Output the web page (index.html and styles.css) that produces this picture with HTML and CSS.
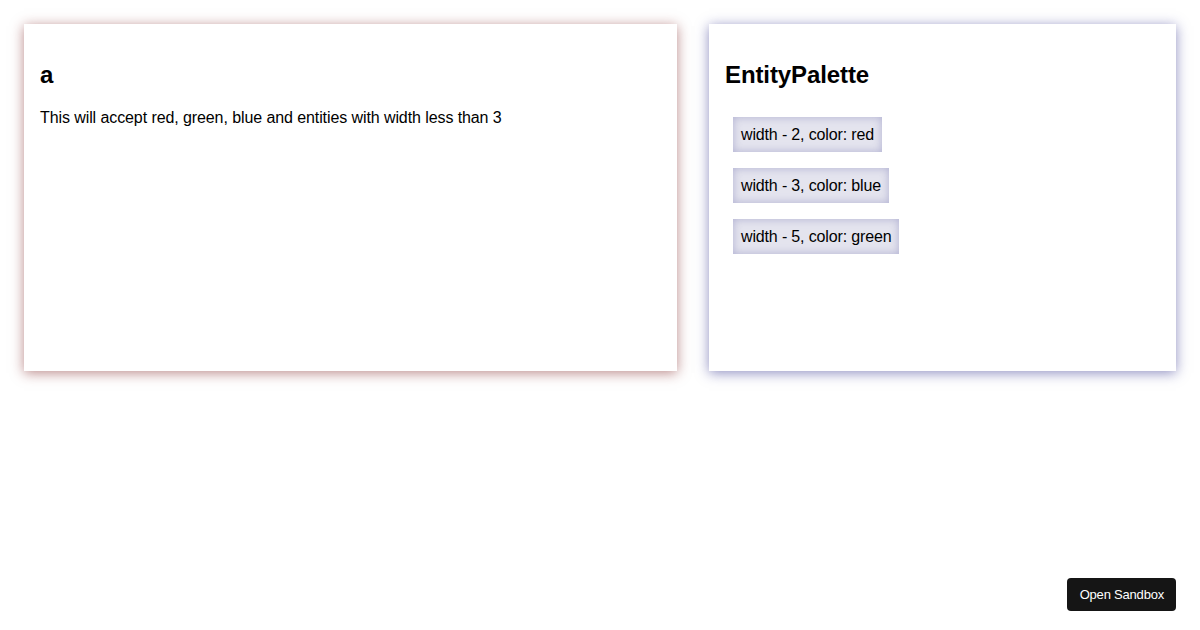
FILE: index.html
```html
<!DOCTYPE html>
<html lang="en">
<head>
    <meta charset="UTF-8">
    <meta name="viewport" content="width=device-width, initial-scale=1.0">
    <title>Entity drop</title>
    <link rel="stylesheet" href="styles.css">
</head>
<body>

<div class="board">
    <div class="card card-target">
        <h2>a</h2>
        <p>This will accept red, green, blue and entities with width less than 3</p>
    </div>
    <div class="card card-palette">
        <h2>EntityPalette</h2>
        <div class="entity-list">
            <div class="entity">width - 2, color: red</div>
            <div class="entity">width - 3, color: blue</div>
            <div class="entity">width - 5, color: green</div>
        </div>
    </div>
</div>

<a class="sandbox-btn" href="#">Open Sandbox</a>

</body>
</html>
```

FILE: styles.css
```css
/* global */
* {
    box-sizing: border-box;
}

body {
    margin: 0;
    padding: 24px;
    font-family: 'Liberation Sans', Arial, sans-serif;
    color: #000;
    background: #fff;
}

/* cards */
.board {
    display: grid;
    grid-template-columns: 653px 467px;
    gap: 32px;
}

.card {
    height: 347px;
    padding: 17px 16px;
    background: #fff;
}

.card h2 {
    margin: 20px 0 20px;
    font-size: 24px;
    font-weight: bold;
    letter-spacing: -0.1px;
}

.card p {
    margin: 0;
    font-size: 16px;
    letter-spacing: -0.09px;
}

.card-target {
    box-shadow: 0 2px 12px rgba(130, 40, 40, 0.55);
}

.card-palette {
    box-shadow: 0 2px 12px rgba(50, 50, 140, 0.55);
}

/* palette items */
.entity-list {
    display: flex;
    flex-direction: column;
    align-items: flex-start;
    gap: 16px;
    padding: 0 8px;
    margin-top: 28px;
}

.entity {
    padding: 8px 8px;
    font-size: 16px;
    line-height: 19px;
    letter-spacing: -0.15px;
    background: #e4e4ee;
    box-shadow: inset 0 0 8px rgba(140, 140, 190, 0.6);
}

/* sandbox button */
.sandbox-btn {
    position: fixed;
    right: 24px;
    bottom: 19px;
    padding: 9px 12px 9px 13px;
    background: #151515;
    color: #fff;
    border-radius: 4px;
    font-size: 13px;
    letter-spacing: -0.2px;
    text-decoration: none;
}
```
